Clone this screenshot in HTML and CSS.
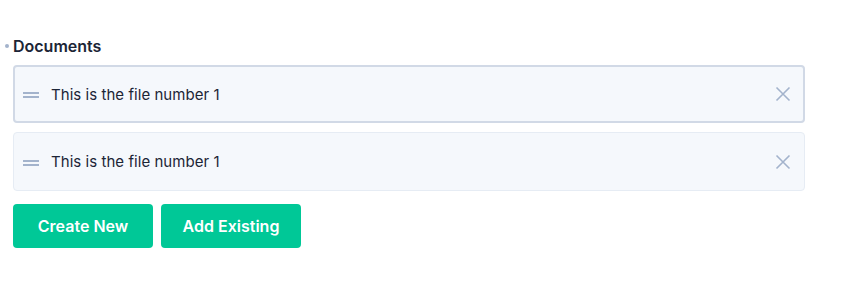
FILE: index.html
```html
<!DOCTYPE html>
<html>
<head>
<meta charset="utf-8">
<link rel="stylesheet" href="styles.css">
</head>
<body>
<div class="field">
  <div class="label"><span class="dot"></span>Documents</div>
  <div class="list">
    <div class="row active">
      <svg class="drag" width="16" height="6" viewBox="0 0 16 6"><rect x="0" y="0" width="16" height="2" fill="#a3b3cc"/><rect x="0" y="4" width="16" height="2" fill="#a3b3cc"/></svg>
      <span class="name">This is the file number 1</span>
      <svg class="close" width="16" height="16" viewBox="0 0 16 16"><path d="M1.5 1.5L14.5 14.5M14.5 1.5L1.5 14.5" stroke="#a3b3cc" stroke-width="1.6" fill="none"/></svg>
    </div>
    <div class="row">
      <svg class="drag" width="16" height="6" viewBox="0 0 16 6"><rect x="0" y="0" width="16" height="2" fill="#a3b3cc"/><rect x="0" y="4" width="16" height="2" fill="#a3b3cc"/></svg>
      <span class="name">This is the file number 1</span>
      <svg class="close" width="16" height="16" viewBox="0 0 16 16"><path d="M1.5 1.5L14.5 14.5M14.5 1.5L1.5 14.5" stroke="#a3b3cc" stroke-width="1.6" fill="none"/></svg>
    </div>
  </div>
  <div class="actions">
    <button class="btn">Create New</button>
    <button class="btn">Add Existing</button>
  </div>
</div>
</body>
</html>
```
FILE: styles.css
```css
html, body { margin: 0; background: #fff; }
body { font-family: Inter, "Noto Sans", sans-serif; color: #1a2233; }
.field { padding: 36px 0 0 13px; width: 792px; }
.label { position: relative; font-size: 16px; font-weight: 600; line-height: 20px; color: #1c2536; }
.dot { position: absolute; left: -8px; top: 8px; width: 4px; height: 4px; border-radius: 50%; background: #a3b3cc; }
.list { margin-top: 9px; display: flex; flex-direction: column; gap: 9px; }
.row { box-sizing: border-box; height: 59px; display: flex; align-items: center; background: #f5f8fc; border: 1px solid #e6ecf4; border-radius: 4px; padding: 0 14px 0 9px; }
.row.active { height: 58px; border: 2px solid #d1d9e6; padding: 0 13px 0 8px; }
.drag { flex: none; margin-top: 2px; }
.name { flex: 1; margin-left: 12px; font-size: 15px; letter-spacing: 0.05px; color: #1c2536; }
.close { flex: none; margin-right: -1px; }
.actions { margin-top: 13px; display: flex; gap: 8px; }
.btn { width: 140px; height: 44px; border: 0; border-radius: 4px; background: #00c897; color: #fff; font-family: Inter, "Noto Sans", sans-serif; font-size: 16px; font-weight: 600; cursor: pointer; }
```
